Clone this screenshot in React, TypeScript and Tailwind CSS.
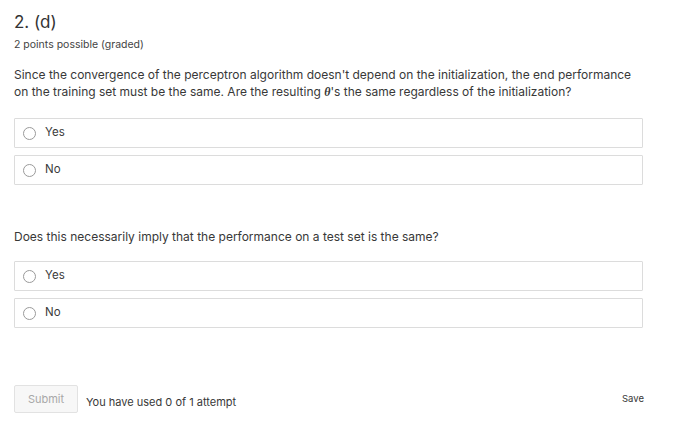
import { useState } from 'react';

const FONT = { fontFamily: 'Inter, "Noto Sans", sans-serif' };

// Single radio answer row, boxed like the edX problem options.
function Option({ label, name, checked, onPick }: { label: string; name: string; checked: boolean; onPick: () => void }) {
  return (
    <label
      onClick={onPick}
      className="flex items-center h-[30px] border border-[#dcdcdc] rounded-[1px] pl-[8px] cursor-pointer"
    >
      <span className="w-[13px] h-[13px] rounded-full border border-[#9a9a9a] bg-white flex items-center justify-center">
        {checked && <span className="w-[6px] h-[6px] rounded-full bg-[#0075b4]" />}
      </span>
      <span className="ml-[9px] text-[11.5px] text-[#3a3a3a]">{label}</span>
      <input type="radio" name={name} className="hidden" readOnly checked={checked} />
    </label>
  );
}

export default function App() {
  const [a1, setA1] = useState<string | null>(null);
  const [a2, setA2] = useState<string | null>(null);

  return (
    <div className="w-[673px] h-[433px] bg-white text-[#333]" style={FONT}>
      <div className="pl-[14px] pr-[30px] pt-[11px]">
        <h2 className="text-[17px] leading-[22px] font-normal text-[#333]">2. (d)</h2>
        <p className="mt-[5px] text-[10.5px] leading-[14px] text-[#444]">2 points possible (graded)</p>

        <p className="mt-[14px] text-[12px] leading-[17px] text-[#383838]">
          Since the convergence of the perceptron algorithm doesn't depend on the initialization, the end performance
          <br />
          on the training set must be the same. Are the resulting <i className="font-serif font-semibold">θ</i>'s the same regardless of the initialization?
        </p>

        <div className="mt-[17px] flex flex-col gap-[7px]">
          <Option label="Yes" name="q1" checked={a1 === 'yes'} onPick={() => setA1('yes')} />
          <Option label="No" name="q1" checked={a1 === 'no'} onPick={() => setA1('no')} />
        </div>

        <p className="mt-[43px] text-[12px] leading-[17px] text-[#383838]">
          Does this necessarily imply that the performance on a test set is the same?
        </p>

        <div className="mt-[16px] flex flex-col gap-[7px]">
          <Option label="Yes" name="q2" checked={a2 === 'yes'} onPick={() => setA2('yes')} />
          <Option label="No" name="q2" checked={a2 === 'no'} onPick={() => setA2('no')} />
        </div>

        <div className="mt-[57px] flex items-center">
          <button className="w-[64px] h-[28px] border border-[#e2e2e2] bg-[#f7f7f7] text-[11px] text-[#a8a8a8] rounded-[2px]">
            Submit
          </button>
          <span className="ml-[8px] mt-[6px] text-[11px] text-[#383838]">You have used 0 of 1 attempt</span>
          <button className="ml-auto mr-[-1px] text-[9.5px] text-[#383838]">Save</button>
        </div>
      </div>
    </div>
  );
}
